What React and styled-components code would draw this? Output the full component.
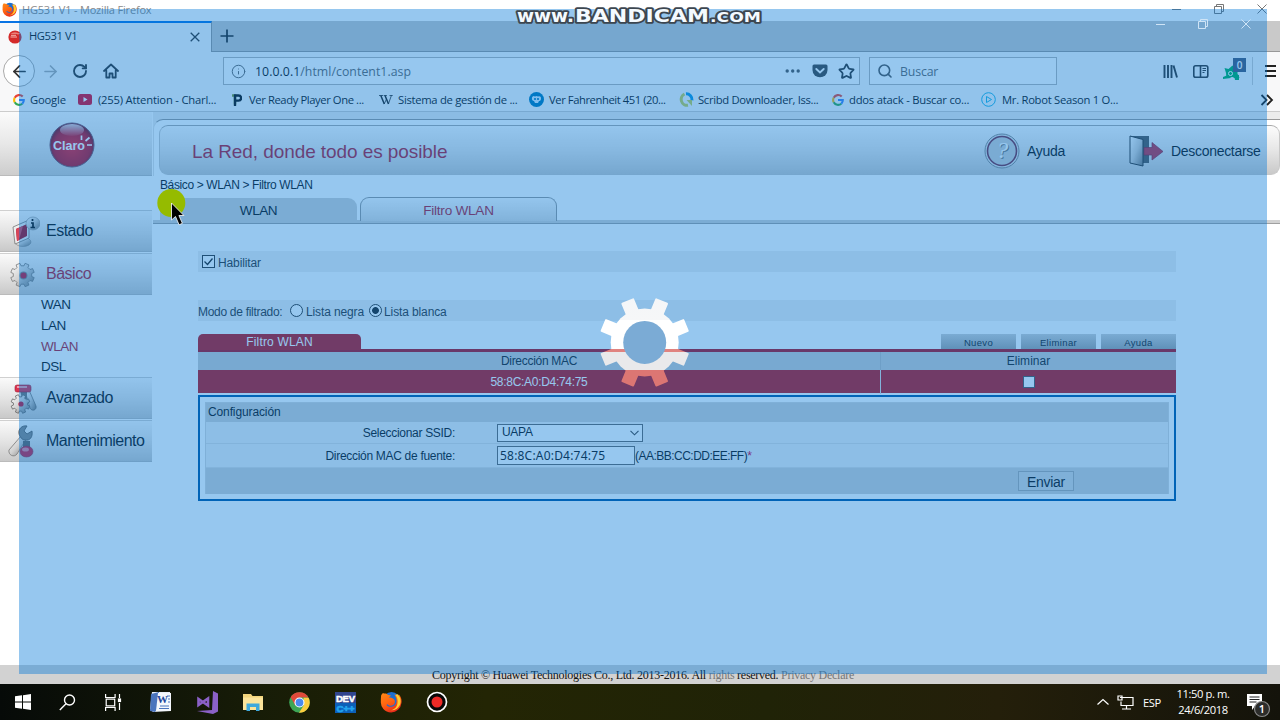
import React from "react";
import styled, { createGlobalStyle } from "styled-components";
import { ArrowLeft, ArrowRight, RotateCw, Star, Search, Info } from "lucide-react";

const GlobalStyle = createGlobalStyle`
  * {
    box-sizing: border-box;
  }
  body {
    margin: 0;
    overflow: hidden;
    background: #fff;
  }
`;

const Screen = styled.div`
  position: relative;
  width: 1280px;
  height: 720px;
  overflow: hidden;
  display: flex;
  flex-direction: column;
  font-family: "Liberation Sans", Arial, sans-serif;
  color: #111;
`;

/* ---------- browser ---------- */

const TitleBar = styled.div`
  height: 21px;
  display: flex;
  align-items: center;
  padding: 0 13px 3px 2px;
  background: #fff;
  font: 11px/18px "Open Sans", sans-serif;
  color: #8a8a8a;
`;

const TitleText = styled.span`
  flex: 1;
  margin: 2px 0 0 5px;
  letter-spacing: -0.18px;
`;

const WindowButtons = styled.div`
  display: flex;
  gap: 32px;
  align-items: center;
  color: ${(p) => p.$color || "#777"};
`;

const TabStrip = styled.div`
  height: 31px;
  display: flex;
  background: #c9c9c9;
  border-bottom: 1px solid #989898;
`;

const BrowserTab = styled.div`
  width: 212px;
  height: 31px;
  display: flex;
  align-items: center;
  padding: 0 11px 2px 8px;
  background: #f8f8f9;
  border-top: 2px solid #0a74e4;
  border-right: 1px solid #989898;
  font: 11.2px/26px "Open Sans", sans-serif;
  letter-spacing: -0.4px;
  span {
    flex: 1;
    margin: -2px 0 0 7px;
  }
`;

const NewTab = styled.div`
  display: flex;
  align-items: center;
  padding: 0 0 1px 8px;
`;

const NavBar = styled.div`
  height: 38px;
  display: flex;
  align-items: center;
  background: #f8f8f9;
  color: #333;
`;

const BackButton = styled.div`
  width: 32px;
  height: 32px;
  margin: 0 6px 0 3px;
  border: 1px solid #aaa;
  border-radius: 50%;
  background: #fff;
  display: grid;
  place-items: center;
`;

const NavSlot = styled.div`
  width: ${(p) => p.$w || 30}px;
  display: grid;
  place-items: center;
  color: ${(p) => p.$color || "#333"};
`;

const UrlBar = styled.div`
  width: ${(p) => p.$w}px;
  height: 28px;
  margin-left: ${(p) => p.$left}px;
  padding-left: 7px;
  border: 1px solid #b4b4b4;
  background: #fff;
  display: flex;
  align-items: center;
  font: 12.3px/26px "Open Sans", sans-serif;
  color: #666;
  b {
    font-weight: 400;
    color: #111;
  }
  span {
    flex: 1;
    margin: 1px 0 0 ${(p) => p.$gap || 9}px;
    letter-spacing: ${(p) => p.$ls || 0.05}px;
  }
`;

const ToolbarEnd = styled.div`
  flex: 1;
  display: flex;
  align-items: center;
  padding-left: 98px;
`;

const Bookmarks = styled.div`
  height: 22px;
  display: flex;
  padding-left: 13px;
  background: #f8f8f9;
  border-bottom: 1px solid #ccc;
`;

const Bookmark = styled.div`
  width: ${(p) => p.$w}px;
  display: flex;
  align-items: center;
  padding-bottom: 2px;
  white-space: nowrap;
  font: 11.25px/18px "Open Sans", sans-serif;
  letter-spacing: ${(p) => p.$ls}px;
`;

const BookmarkIcon = styled.div`
  width: ${(p) => p.$w}px;
  display: flex;
  flex: none;
`;

/* ---------- router page ---------- */

const Page = styled.div`
  height: 553px;
  display: flex;
  background: #fff;
`;

const Sidebar = styled.div`
  width: 152px;
  margin-right: 1px;
  display: flex;
  flex-direction: column;
`;

const LogoBox = styled.div`
  height: 64px;
  margin-bottom: 34px;
  padding: 2px 8px 0 0;
  display: grid;
  place-items: center;
  background: linear-gradient(#fbfbfb, #e8e8e8 50%, #cdcdcd);
  border-bottom: 1px solid #bbb;
`;

const MenuItem = styled.div`
  height: 42px;
  margin-bottom: ${(p) => p.$gap || 0}px;
  padding-left: 8px;
  display: flex;
  align-items: center;
  gap: 6px;
  background: linear-gradient(#fafafa, #e4e4e4 50%, #c9c9c9);
  border-top: 1px solid #d0d0d0;
  border-bottom: 1px solid #bbb;
  font-size: 16px;
  letter-spacing: -0.5px;
  color: ${(p) => (p.$active ? "#b41b33" : "#111")};
  svg {
    flex: none;
  }
`;

const SubMenu = styled.div`
  height: 82px;
  padding: 0 0 0 41px;
  font-size: 13.5px;
  line-height: 20.8px;
`;

const SubItem = styled.div`
  letter-spacing: -0.5px;
  color: ${(p) => (p.$active ? "#b41b33" : "#111")};
`;

const Main = styled.div`
  flex: 1;
  display: flex;
  flex-direction: column;
`;

const Masthead = styled.div`
  height: 64px;
  padding-top: 7px;
  background: #ececec;
`;

const HeaderFrame = styled.div`
  height: 57px;
  padding: 5px 0 0 5px;
  border-top: 1px solid #999;
  border-left: 1px solid #e2e2e2;
  border-top-left-radius: 10px;
  background: #fff;
`;

const Header = styled.div`
  height: 50px;
  padding: 2px 0 0 32px;
  display: flex;
  align-items: center;
  border: 1px solid #c8c8c8;
  border-top-color: #aaa;
  border-radius: 9px;
  background: linear-gradient(#fcfcfc, #e6e6e6 50%, #c9c9c9);
  font-size: 14px;
`;

const Slogan = styled.div`
  width: 792px;
  padding-top: 1px;
  font-size: 19px;
  letter-spacing: -0.08px;
  color: #b41b33;
`;

const HeaderLink = styled.div`
  width: ${(p) => p.$w}px;
  display: flex;
  align-items: center;
  gap: 7px;
  letter-spacing: -0.3px;
`;

const Breadcrumb = styled.div`
  height: 21px;
  padding-left: 7px;
  font-size: 12px;
  line-height: 19px;
  letter-spacing: -0.38px;
`;

const PageTabs = styled.div`
  height: 27px;
  padding-left: 7px;
  display: flex;
  gap: 3px;
  border-bottom: 1px solid #a0a0a0;
  background: linear-gradient(transparent 23px, #d2d2d2 23px);
`;

const PageTab = styled.div`
  width: 197px;
  height: ${(p) => (p.$active ? 24 : 22)}px;
  margin-top: ${(p) => (p.$active ? 0 : 1)}px;
  border-radius: 9px 9px 0 0;
  border: ${(p) => (p.$active ? "1px solid #999" : "0")};
  border-bottom: 0;
  background: ${(p) =>
    p.$active ? "linear-gradient(#fcfcfc, #dcdcdc)" : "#d2d2d2"};
  color: ${(p) => (p.$active ? "#b41b33" : "#111")};
  font-size: 13.6px;
  line-height: 26px;
  letter-spacing: ${(p) => (p.$active ? -0.25 : -0.5)}px;
  text-align: center;
`;

const Content = styled.div`
  width: 978px;
  margin-left: 45px;
  display: flex;
  flex-direction: column;
  font-size: 12px;
  letter-spacing: -0.3px;
`;

const OptionRow = styled.div`
  height: 21px;
  margin-top: ${(p) => p.$top}px;
  display: flex;
  align-items: center;
  padding: 2px 0 0 ${(p) => p.$pad || 0}px;
  background: #f0f0f0;
  color: #333;
  letter-spacing: -0.12px;
`;

const ModeLabel = styled.span`
  width: 86px;
  letter-spacing: -0.3px;
`;

const CheckBox = styled.span`
  width: 13px;
  height: 13px;
  margin: 0 3px 3px 0;
  border: 1px solid #333;
  background: #fff;
  display: grid;
  place-items: center;
`;

const Radio = styled.span`
  width: 13px;
  height: 13px;
  margin: ${(p) => p.$margin};
  border: 1px solid #333;
  border-radius: 50%;
  background: ${(p) =>
    p.$on ? "radial-gradient(circle, #222 3px, #fff 3.8px)" : "#fff"};
`;

const TableTop = styled.div`
  height: 18px;
  margin-top: 13px;
  display: flex;
  align-items: flex-start;
  justify-content: space-between;
  border-bottom: 3px solid #b30c1c;
`;

const TableTab = styled.div`
  width: 163px;
  height: 16px;
  border-radius: 5px 5px 0 0;
  background: #c11219;
  color: #fff;
  text-align: center;
  line-height: 17px;
  letter-spacing: 0.16px;
`;

const TableActions = styled.div`
  display: flex;
  gap: 5px;
`;

const ActionButton = styled.div`
  width: 75px;
  height: 15px;
  background: linear-gradient(#d0d0d0, #a3a3a3);
  font-size: 9.5px;
  line-height: 17px;
  text-align: center;
  letter-spacing: 0.35px;
  color: #222;
`;

const TableRow = styled.div`
  height: ${(p) => (p.$selected ? 23 : 18)}px;
  display: grid;
  grid-template-columns: 683px 295px;
  line-height: ${(p) => (p.$selected ? 24 : 19)}px;
  background: ${(p) => (p.$selected ? "#c11219" : "#cdcdcd")};
  color: ${(p) => (p.$selected ? "#fff" : "#222")};
`;

const Cell = styled.div`
  display: flex;
  justify-content: center;
  align-items: center;
  letter-spacing: ${(p) => p.$ls || -0.3}px;
  border-right: ${(p) => (p.$line ? `1px solid ${p.$line}` : "0")};
`;

const WhiteBox = styled.span`
  width: 12px;
  height: 12px;
  background: #fff;
  border: 1px solid #555;
`;

const ConfigPanel = styled.div`
  height: 106px;
  margin-top: 2px;
  padding: 5px 5px 0;
  border: 2px solid #0055a0;
  background: #fff;
`;

const ConfigInner = styled.div`
  border: 1px solid #d8d8d8;
  border-bottom: 0;
  background: #f0f0f0;
`;

const ConfigTitle = styled.div`
  height: 19px;
  padding-left: 2px;
  line-height: 19px;
  background: #d2d2d2;
  letter-spacing: -0.12px;
`;

const FormRow = styled.div`
  height: ${(p) => p.$h}px;
  display: grid;
  grid-template-columns: 249px 42px 1fr;
  align-items: center;
  border-bottom: 1px solid #dedede;
`;

const FieldLabel = styled.div`
  text-align: right;
`;

const FieldCell = styled.div`
  grid-column: 3;
  display: flex;
  align-items: center;
`;

const SelectBox = styled.div`
  width: 146px;
  height: 18px;
  padding: 0 3px 0 4px;
  border: 1px solid #666;
  background: #fff;
  display: flex;
  align-items: center;
  justify-content: space-between;
  line-height: 17px;
`;

const TextInput = styled.div`
  width: 138px;
  height: 19px;
  padding-left: 2px;
  border: 1px solid #666;
  background: #fff;
  font: 12px/18px "Noto Sans", sans-serif;
  letter-spacing: 0.2px;
`;

const Hint = styled.span`
  letter-spacing: -0.52px;
`;

const Required = styled.span`
  color: #d0003c;
`;

const FormFooter = styled.div`
  height: 26px;
  padding-right: 94px;
  display: flex;
  align-items: center;
  justify-content: flex-end;
  background: #d2d2d2;
`;

const SendButton = styled.div`
  width: 56px;
  height: 20px;
  border: 1px solid #aaa;
  background: #d8d8d8;
  font-size: 14px;
  line-height: 20px;
  text-align: center;
`;

const Copyright = styled.div`
  height: 19px;
  padding-left: 6px;
  background: #d2d2d2;
  text-align: center;
  font: 12px/20px "Liberation Serif", serif;
  letter-spacing: -0.27px;
  white-space: pre;
  span {
    color: #777;
  }
`;

/* ---------- taskbar ---------- */

const Taskbar = styled.div`
  height: 36px;
  display: flex;
  align-items: center;
  background: linear-gradient(90deg, #060a08, #171c07 20%, #232504 38%, #202307 60%, #241f0a 78%, #14130b);
  color: #fff;
  font-family: "Open Sans", sans-serif;
  font-size: 11.2px;
`;

const TaskIcons = styled.div`
  flex: 1;
  display: flex;
  align-items: center;
`;

const TaskSlot = styled.div`
  width: ${(p) => p.$w || 46}px;
  display: grid;
  place-items: center;
`;

const Tray = styled.div`
  display: flex;
  align-items: center;
`;

const Clock = styled.div`
  width: 68px;
  margin: 0 3px 0 4px;
  line-height: 16px;
  text-align: center;
  letter-spacing: -0.4px;
`;

const Language = styled.div`
  width: 26px;
  text-align: center;
  letter-spacing: -0.4px;
`;

/* ---------- things lying over the desktop ---------- */

const GhostWindow = styled.div`
  position: absolute;
  left: 19px;
  top: 9px;
  width: 1248px;
  height: 665px;
  background: rgba(0, 120, 215, 0.41);
  display: flex;
  justify-content: flex-end;
  align-items: flex-start;
  padding: 10px 16px 0 0;
`;

const Floating = styled.svg`
  position: absolute;
  left: ${(p) => p.$x}px;
  top: ${(p) => p.$y}px;
`;

const FirefoxIcon = ({ size = 16 }) => (
  <svg width={size} height={size} viewBox="0 0 20 20">
    <defs>
      <linearGradient id={`fx${size}`} x1="0" y1="0" x2="0.6" y2="1">
        <stop offset="0" stopColor="#ff8a16" />
        <stop offset="0.5" stopColor="#ff6611" />
        <stop offset="1" stopColor="#e8281c" />
      </linearGradient>
    </defs>
    <circle cx="10.5" cy="9" r="8" fill="#1c6fd0" />
    <path d="M1 4C2 2 3 1 3.5 2.3 5 2 6.5 2.5 7 3.5L10 4 8 6c4 0 6 2 5.500 4.500C13 14 8 14 7 12c-1 0-1 1-1 1 3 3 9 1 9-4 0-3-1-4-2-6 2 1 3 2 3.600 3.500L17 3c2 2 3 5 2.500 8A9.400 9.400 0 0 1 10 19.500 9.400 9.400 0 0 1 .8 9C.7 7 1 5 1 4z" fill={`url(#fx${size})`} />
    <path d="M16 3c3 3 3.500 7 2 10s-5 5-8 4.500c4-1 6-4 6-8 0-2-.5-4-2-6z" fill="#ffcf2e" />
  </svg>
);

const ClaroDot = () => (
  <svg width="14" height="14" viewBox="0 0 14 14">
    <circle cx="7" cy="7" r="6.600" fill="#d42a2a" />
    <path d="M2.500 7h6.500M3 5.300h5M10 4.500l1.500-1.500" stroke="#f5b3ac" strokeWidth="1" />
    <path d="M2.500 4a5.500 4 0 0 1 9 0z" fill="#e9807a" />
  </svg>
);

const GoogleIcon = () => (
  <svg width="12" height="12" viewBox="0 0 12 12" fill="none" strokeWidth="2.100">
    <path d="M9.700 2.600A5 5 0 0 0 1.700 3.700" stroke="#ea4335" />
    <path d="M1.700 3.700a5 5 0 0 0 0 4.600" stroke="#fbbc05" />
    <path d="M1.700 8.300a5 5 0 0 0 7.600 1.400" stroke="#34a853" />
    <path d="M9.300 9.700A5 5 0 0 0 10.800 6H6" stroke="#4285f4" />
  </svg>
);

const bookmarks = [
  {
    text: "Google",
    w: 65,
    icon: 17,
    ls: -0.2,
    draw: <GoogleIcon />,
  },
  {
    text: "(255) Attention - Charl...",
    w: 153,
    icon: 20,
    ls: -0.21,
    draw: (
      <svg width="14" height="11" viewBox="0 0 14 11">
        <rect width="14" height="11" rx="2.500" fill="#e0062a" />
        <path d="M5.500 3l4 2.500-4 2.500z" fill="#fff" />
      </svg>
    ),
  },
  {
    text: "Ver Ready Player One ...",
    w: 148,
    icon: 18,
    ls: -0.41,
    draw: (
      <svg width="11" height="12" viewBox="0 0 11 12" fill="none">
        <path d="M1 1.500h3v9" stroke="#7d9a33" strokeWidth="2.500" />
        <path d="M4 12V1.500h3.500a2.200 2.200 0 0 1 0 5.200H4" stroke="#111" strokeWidth="2.300" />
      </svg>
    ),
  },
  {
    text: "Sistema de gestión de ...",
    w: 150,
    icon: 19,
    ls: -0.29,
    draw: (
      <svg width="14" height="10" viewBox="0 0 14 10" fill="none" stroke="#222">
        <path d="M1.800 .5l3.500 8.500M6 .5l3.500 8.500" strokeWidth="1.500" />
        <path d="M5.200 9l2.300-5M9.400 9l3-8.500M0 .5h4M4.700 .5h3.200M10.500 .5h3.200" strokeWidth=".8" />
      </svg>
    ),
  },
  {
    text: "Ver Fahrenheit 451 (20...",
    w: 150,
    icon: 20,
    ls: -0.44,
    draw: (
      <svg width="15" height="15" viewBox="0 0 15 15">
        <circle cx="7.500" cy="7.500" r="7.500" fill="#007ab8" />
        <path d="M3 5.500a2 2 0 0 1 3-1 3 3 0 0 1 3 0 2 2 0 0 1 3 2c0 2-1 2.500-2 2.500l-1 2H6L5 9C3.500 9 2.500 7.500 3 5.500z" fill="#d9efff" />
        <circle cx="6" cy="7" r="1.100" fill="#007ab8" />
        <circle cx="9" cy="7" r="1.100" fill="#007ab8" />
      </svg>
    ),
  },
  {
    text: "Scribd Downloader, Iss...",
    w: 153,
    icon: 19,
    ls: -0.32,
    draw: (
      <svg width="15" height="15" viewBox="0 0 15 15" fill="none" strokeWidth="3">
        <path d="M5.500 2A6 6 0 0 0 9 13.300" stroke="#c7cf55" />
        <path d="M7 1.800a5.800 5.800 0 0 1 6 6.500" stroke="#1298e0" />
        <path d="M7.500 8l5.500 6v-6z" fill="#c7cf55" />
      </svg>
    ),
  },
  {
    text: "ddos atack - Buscar co...",
    w: 149,
    icon: 17,
    ls: -0.22,
    draw: <GoogleIcon />,
  },
  {
    text: "Mr. Robot Season 1 O...",
    w: 279,
    icon: 21,
    ls: -0.28,
    draw: (
      <svg width="15" height="15" viewBox="0 0 15 15" fill="none" stroke="#22b4e0">
        <circle cx="7.500" cy="7.500" r="6.800" />
        <path d="M5.500 4.500l5 3-5 3z" />
      </svg>
    ),
  },
];

const WindowControls = ({ color }) => (
  <WindowButtons $color={color}>
    <svg width="10" height="10" stroke="currentColor">
      <path d="M0 5.500h9" />
    </svg>
    <svg width="11" height="10" stroke="currentColor" fill="none">
      <path d="M.5 2.500h7v7h-7zM2.500 2.500v-2h7v7h-2" />
    </svg>
    <svg width="10" height="10" stroke="currentColor">
      <path d="M.5 .5l9 9M9.500 .5l-9 9" />
    </svg>
  </WindowButtons>
);

const gearPath = (cx, cy, r, body, n) => {
  const points = [];
  for (let i = 0; i < n; i++) {
    const a = (i / n) * Math.PI * 2 + Math.PI / n;
    const steps = [
      [body, -0.3],
      [r, -0.22],
      [r, 0.22],
      [body, 0.3],
    ];
    steps.forEach(([d, k]) => {
      const t = a + (k * Math.PI * 2) / n;
      points.push(`${(cx + d * Math.cos(t)).toFixed(1)} ${(cy + d * Math.sin(t)).toFixed(1)}`);
    });
  }
  return `M${points.join("L")}z`;
};

const StatusIcon = () => (
  <svg width="32" height="32" viewBox="0 0 32 32">
    <defs>
      <linearGradient id="steel" x1="0" y1="0" x2="1" y2="1">
        <stop offset="0" stopColor="#fff" />
        <stop offset="0.5" stopColor="#cfcfcf" />
        <stop offset="1" stopColor="#777" />
      </linearGradient>
    </defs>
    <ellipse cx="15" cy="27" rx="8" ry="4.500" fill="url(#steel)" stroke="#888" strokeWidth=".6" />
    <path d="M5 12l16-7v18L7 29z" fill="#eee" stroke="#777" strokeWidth=".8" />
    <path d="M8 14l11-5v12L9 26z" fill="#a80d22" />
    <path d="M8 14l7-3-4 14-2 1z" fill="#d8455a" />
    <ellipse cx="25" cy="8.500" rx="7" ry="6.500" fill="url(#steel)" stroke="#999" strokeWidth=".7" />
    <path d="M23 8h2v4.500M22.500 12.500h4.500M24.500 4v2" stroke="#111" strokeWidth="1.700" fill="none" />
  </svg>
);

const BasicIcon = () => (
  <svg width="32" height="32" viewBox="0 0 32 32">
    <path d={gearPath(14.5, 17, 12, 9.3, 8)} fill="url(#steel)" stroke="#777" strokeWidth=".8" />
    <circle cx="15.500" cy="17.500" r="4" fill="#888" />
    <circle cx="15.500" cy="17.500" r="3" fill="#c81838" />
  </svg>
);

const AdvancedIcon = () => (
  <svg width="32" height="32" viewBox="0 0 32 32">
    <path d="M17 9l4-1 7 16c1 4-4 6-6 2z" fill="url(#steel)" stroke="#666" strokeWidth=".7" />
    <path d="M12 8h7v9h-5z" fill="#777" />
    <rect x="7" y="3" width="16" height="7" rx="2" fill="#dc3450" stroke="#a01c34" strokeWidth=".6" />
    <path d="M9 5h10" stroke="#fff" strokeOpacity=".7" strokeWidth="1.500" />
    <path d={gearPath(12.5, 22, 9.5, 7.2, 8)} fill="url(#steel)" stroke="#666" strokeWidth=".8" />
    <circle cx="13" cy="22" r="2.600" fill="#c81838" />
  </svg>
);

const MaintenanceIcon = () => (
  <svg width="32" height="36" viewBox="0 0 32 36">
    <path d="M13 13l6 2-10 16c-3 4-9 1-8-4z" fill="url(#steel)" stroke="#777" strokeWidth=".8" />
    <path d="M11 11c-1-5 3-9 8-8l-3 5 3 3 5-3c1 6-2 10-7 9-3 0-5-3-6-6z" fill="#888" stroke="#555" strokeWidth=".8" />
    <path d="M15 18h7v7h-7z" fill="#666" />
    <ellipse cx="18.500" cy="28.500" rx="6.500" ry="5.500" fill="#cf2448" stroke="#99304b" strokeWidth=".6" />
    <ellipse cx="17.500" cy="26.500" rx="3.500" ry="2" fill="#fff" fillOpacity=".45" />
  </svg>
);

const ClaroLogo = () => (
  <svg width="46" height="46" viewBox="0 0 46 46">
    <defs>
      <radialGradient id="claro" cx="0.5" cy="0.55" r="0.55">
        <stop offset="0" stopColor="#ea1d30" />
        <stop offset="0.75" stopColor="#c01228" />
        <stop offset="1" stopColor="#741020" />
      </radialGradient>
      <linearGradient id="gloss" x1="0" y1="0" x2="0" y2="1">
        <stop offset="0" stopColor="#fff" stopOpacity="0.8" />
        <stop offset="1" stopColor="#fff" stopOpacity="0.05" />
      </linearGradient>
    </defs>
    <circle cx="23" cy="23" r="22" fill="url(#claro)" stroke="#7a5060" strokeWidth="1" />
    <ellipse cx="23" cy="8" rx="12" ry="6" fill="url(#gloss)" />
    <text x="4" y="28" fontFamily="Liberation Sans" fontSize="13" fontWeight="700" fill="#fff" textLength="32" lengthAdjust="spacingAndGlyphs">
      Claro
    </text>
    <path d="M32.500 13.500v4.500M36.500 19l4-3.500M38 23h5" stroke="#fff" strokeWidth="1.700" />
  </svg>
);

const HelpIcon = () => (
  <svg width="36" height="36" viewBox="0 0 36 36">
    <circle cx="18" cy="18" r="17" fill="#e4e4e4" stroke="#888" strokeWidth="1" />
    <circle cx="18" cy="18" r="14.500" fill="#cfcfcf" stroke="#7a3048" strokeWidth="1.600" />
    <text x="19" y="26" textAnchor="middle" fontFamily="Liberation Serif" fontStyle="italic" fontSize="24" fill="#777">
      ?
    </text>
    <text x="18" y="25" textAnchor="middle" fontFamily="Liberation Serif" fontStyle="italic" fontSize="24" fill="#fff">
      ?
    </text>
  </svg>
);

const LogoutIcon = () => (
  <svg width="35" height="32" viewBox="0 0 35 32">
    <path d="M1 1h19v27h-6V4H1z" fill="#555" />
    <path d="M1 1l13 3.500V31L1 28z" fill="url(#steel)" stroke="#333" strokeWidth="1" />
    <path d="M15 12.500h8V7.500l11 9-11 8.500v-5h-8z" fill="#c03048" stroke="#902038" strokeWidth=".7" />
  </svg>
);

const teeth = [22.5, 67.5, 112.5, 157.5, 202.5, 247.5, 292.5, 337.5];

const App = () => {
  return (
    <Screen>
      <GlobalStyle />

      <TitleBar>
        <FirefoxIcon size={15} />
        <TitleText>HG531 V1 - Mozilla Firefox</TitleText>
        <WindowControls />
      </TitleBar>

      <TabStrip>
        <BrowserTab>
          <ClaroDot />
          <span>HG531 V1</span>
          <svg width="10" height="10" stroke="#333" strokeWidth="1.300">
            <path d="M.7 .7l8.600 8.600M9.300 .7L.7 9.300" />
          </svg>
        </BrowserTab>
        <NewTab>
          <svg width="14" height="14" stroke="#222" strokeWidth="1.700">
            <path d="M7 .5v13M.5 7h13" />
          </svg>
        </NewTab>
      </TabStrip>

      <NavBar>
        <BackButton>
          <ArrowLeft size={19} strokeWidth={2.2} />
        </BackButton>
        <NavSlot $w={16} $color="#aaa">
          <ArrowRight size={19} strokeWidth={2} />
        </NavSlot>
        <NavSlot $w={46}>
          <RotateCw size={16} strokeWidth={2.8} />
        </NavSlot>
        <NavSlot $w={13}>
          <svg width="16" height="16" viewBox="0 0 16 16" fill="none" stroke="currentColor" strokeWidth="1.800">
            <path d="M1 8l7-6.500L15 8M3.300 7.500v7h3.200v-4h3v4h3.200v-7" strokeLinejoin="round" strokeLinecap="round" />
          </svg>
        </NavSlot>
        <UrlBar $w={637} $left={107}>
          <Info size={15} strokeWidth={1.6} />
          <span>
            <b>10.0.0.1</b>/html/content1.asp
          </span>
          <NavSlot $w={26}>
            <svg width="16" height="4" fill="#555">
              <circle cx="2.200" cy="2" r="1.700" />
              <circle cx="7.700" cy="2" r="1.700" />
              <circle cx="13.200" cy="2" r="1.700" />
            </svg>
          </NavSlot>
          <NavSlot $w={27}>
            <svg width="16" height="14" viewBox="0 0 16 14">
              <path d="M2 .5h12q1.500 0 1.500 1.500v4a7.500 7.300 0 0 1-15 0V2Q.5 .5 2 .5z" fill="#444" />
              <path d="M4.300 5l3.700 3.500L11.700 5" fill="none" stroke="#fff" strokeWidth="1.900" strokeLinecap="round" />
            </svg>
          </NavSlot>
          <NavSlot $w={26}>
            <Star size={17} strokeWidth={2.5} />
          </NavSlot>
        </UrlBar>
        <UrlBar $w={188} $left={9} $gap={7} $ls={-0.14}>
          <Search size={16} strokeWidth={2.4} color="#555" />
          <span>Buscar</span>
        </UrlBar>
        <ToolbarEnd>
          <NavSlot $w={31}>
            <svg width="15" height="13" stroke="#333" strokeWidth="1.900" fill="none">
              <path d="M1.500 0v13M5 0v13M8.500 0v13M10.500 .5l3.500 12" />
            </svg>
          </NavSlot>
          <NavSlot $w={29}>
            <svg width="16" height="13" stroke="#333" fill="none">
              <rect x=".8" y=".8" width="14" height="11.400" rx="1.800" strokeWidth="1.600" />
              <path d="M7.500 1v11" strokeWidth="1.600" />
              <path d="M9.500 3.500h3.500M9.500 5.500h3.500M9.500 7.500h2" />
            </svg>
          </NavSlot>
          <NavSlot $w={37}>
            <svg width="24" height="28" viewBox="0 0 24 28">
              <path d="M2.500 11l4 1 4-3.500 5 5.500v3l2 3.500-2 2-5-2.500-6 1L4 16z" fill="#00b060" />
              <path d="M1 20l5-2 3 3-8 1zM12 17l5 1 0 5h-4z" fill="#00b060" />
              <circle cx="8.500" cy="16.500" r="2" fill="none" stroke="#fff" />
              <rect x="11" y="1" width="13" height="14" fill="#46597a" />
              <text x="17.500" y="12" fontSize="10" textAnchor="middle" fontFamily="Open Sans" fontWeight="600" fill="#fff">0</text>
            </svg>
          </NavSlot>
          <NavSlot $w={20}>
            <svg width="28" height="28" stroke="#222" strokeWidth="1.900">
              <path d="M.5 0v28" stroke="#ccc" strokeWidth="1" />
              <path d="M13 9h11M13 14h11M13 19h11" />
            </svg>
          </NavSlot>
        </ToolbarEnd>
      </NavBar>

      <Bookmarks>
        {bookmarks.map((b) => (
          <Bookmark key={b.text} $w={b.w} $ls={b.ls}>
            <BookmarkIcon $w={b.icon}>{b.draw}</BookmarkIcon>
            {b.text}
          </Bookmark>
        ))}
        <svg width="14" height="20" fill="none" stroke="#222" strokeWidth="1.800">
          <path d="M1.500 5l5 5-5 5M7 5l5 5-5 5" />
        </svg>
      </Bookmarks>

      <Page>
        <Sidebar>
          <LogoBox>
            <ClaroLogo />
          </LogoBox>
          <MenuItem $gap={1}>
            <StatusIcon />
            Estado
          </MenuItem>
          <MenuItem $active>
            <BasicIcon />
            Básico
          </MenuItem>
          <SubMenu>
            <SubItem>WAN</SubItem>
            <SubItem>LAN</SubItem>
            <SubItem $active>WLAN</SubItem>
            <SubItem>DSL</SubItem>
          </SubMenu>
          <MenuItem $gap={1}>
            <AdvancedIcon />
            Avanzado
          </MenuItem>
          <MenuItem>
            <MaintenanceIcon />
            Mantenimiento
          </MenuItem>
        </Sidebar>

        <Main>
          <Masthead>
            <HeaderFrame>
              <Header>
                <Slogan>La Red, donde todo es posible</Slogan>
                <HeaderLink $w={145}>
                  <HelpIcon />
                  Ayuda
                </HeaderLink>
                <HeaderLink $w={140}>
                  <LogoutIcon />
                  Desconectarse
                </HeaderLink>
              </Header>
            </HeaderFrame>
          </Masthead>
          <Breadcrumb>Básico &gt; WLAN &gt; Filtro WLAN</Breadcrumb>
          <PageTabs>
            <PageTab>WLAN</PageTab>
            <PageTab $active>Filtro WLAN</PageTab>
          </PageTabs>

          <Content>
            <OptionRow $top={27} $pad={4}>
              <CheckBox>
                <svg width="11" height="11" fill="none" stroke="#222" strokeWidth="1.300">
                  <path d="M1.500 5.500l3 3 5-6" />
                </svg>
              </CheckBox>
              Habilitar
            </OptionRow>
            <OptionRow $top={28}>
              <ModeLabel>Modo de filtrado:</ModeLabel>
              <Radio $margin="0 3px 3px 6px" />
              Lista negra
              <Radio $on $margin="0 2px 3px 5px" />
              Lista blanca
            </OptionRow>

            <TableTop>
              <TableTab>Filtro WLAN</TableTab>
              <TableActions>
                <ActionButton>Nuevo</ActionButton>
                <ActionButton>Eliminar</ActionButton>
                <ActionButton>Ayuda</ActionButton>
              </TableActions>
            </TableTop>
            <TableRow>
              <Cell $line="#bbb">Dirección MAC</Cell>
              <Cell $ls={0.05}>Eliminar</Cell>
            </TableRow>
            <TableRow $selected>
              <Cell $line="#ddd">58:8C:A0:D4:74:75</Cell>
              <Cell>
                <WhiteBox />
              </Cell>
            </TableRow>

            <ConfigPanel>
              <ConfigInner>
                <ConfigTitle>Configuración</ConfigTitle>
                <FormRow $h={22}>
                  <FieldLabel>Seleccionar SSID:</FieldLabel>
                  <FieldCell>
                    <SelectBox>
                      UAPA
                      <svg width="9" height="6" fill="none" stroke="#444" strokeWidth="1.100">
                        <path d="M.5 .8l4 4 4-4" />
                      </svg>
                    </SelectBox>
                  </FieldCell>
                </FormRow>
                <FormRow $h={24}>
                  <FieldLabel>Dirección MAC de fuente:</FieldLabel>
                  <FieldCell>
                    <TextInput>58:8C:A0:D4:74:75</TextInput>
                    <Hint>(AA:BB:CC:DD:EE:FF)</Hint>
                    <Required>*</Required>
                  </FieldCell>
                </FormRow>
                <FormFooter>
                  <SendButton>Enviar</SendButton>
                </FormFooter>
              </ConfigInner>
            </ConfigPanel>
          </Content>
        </Main>
      </Page>

      <Copyright>
        Copyright © Huawei Technologies Co., Ltd. 2013-2016. All <span>rights</span> reserved. <span>Privacy Declare</span>
      </Copyright>

      <Taskbar>
        <TaskIcons>
          <TaskSlot $w={45}>
            <svg width="16" height="16" fill="#fff">
              <path d="M0 2.300l7-1v6.200H0zM8 1.200L16 0v7.500H8zM0 8.500h7v6.200l-7-1zM8 8.500h8V16l-8-1.200z" />
            </svg>
          </TaskSlot>
          <TaskSlot $w={45}>
            <svg width="17" height="17" fill="none" stroke="#fff" strokeWidth="1.400">
              <circle cx="10.500" cy="6" r="5" />
              <path d="M7 9.700L.8 16" />
            </svg>
          </TaskSlot>
          <TaskSlot $w={47}>
            <svg width="17" height="17" fill="none" stroke="#fff" strokeWidth="1.200">
              <path d="M.6 0v3.500h9.500V0M.6 17v-3.500h9.500V17M1.200 5.200h8.500v6.600H1.200zM14.500 0v4M14.500 9v7" />
              <rect x="13.500" y="5" width="2" height="2.500" fill="#fff" />
            </svg>
          </TaskSlot>
          <TaskSlot $w={47}>
            <svg width="22" height="22">
              <path d="M2 1h18l1 19-18 1-3-3z" fill="#e8eef8" />
              <path d="M1 3l8-2v14l-4 6-5-1z" fill="#4a74bd" />
              <path d="M8 2h13v18H6z" fill="#f4f7fc" />
              <text x="7" y="12" fontFamily="Liberation Serif" fontWeight="700" fontSize="11" fill="#23479c">W</text>
              <path d="M10 15h9M9 17.500h10M17 5h3M18 8h2M18 11h2" stroke="#4a74bd" />
            </svg>
          </TaskSlot>
          <TaskSlot>
            <svg width="23" height="23">
              <path d="M17 0l5 2.500v18L17 23 1 20l15-1z" fill="#8b61c8" />
              <path d="M2.500 8v6l9.500-6.500v7z" fill="none" stroke="#8b61c8" strokeWidth="2.600" />
            </svg>
          </TaskSlot>
          <TaskSlot>
            <svg width="20" height="18">
              <path d="M0 1h8l1.500 2H20v14H0z" fill="#f2d47c" />
              <path d="M0 4.500h20V17H0z" fill="#fbe49b" />
              <path d="M3.500 10.500h13V18h-3.500v-4H7v4H3.500z" fill="#3fa9dd" />
            </svg>
          </TaskSlot>
          <TaskSlot>
            <svg width="21" height="21" viewBox="0 0 21 21">
              <circle cx="10.500" cy="10.500" r="10.300" fill="#3da656" />
              <path d="M1.600 5.300A10.300 10.300 0 0 1 19.500 5.500H10.500L6 13z" fill="#e0493a" />
              <path d="M19.600 5.800A10.300 10.300 0 0 1 10 20.800L15 13 14.500 5.800z" fill="#fccd3f" />
              <circle cx="10.500" cy="10.500" r="5" fill="#fff" />
              <circle cx="10.500" cy="10.500" r="3.900" fill="#4a8af0" />
            </svg>
          </TaskSlot>
          <TaskSlot>
            <svg width="21" height="21">
              <rect width="21" height="11" fill="#31458f" />
              <rect y="11" width="21" height="10" fill="#0c5fb8" />
              <text x="1" y="10" fontFamily="Liberation Sans" fontWeight="700" fontSize="9.500" fill="#fff" stroke="#fff" strokeWidth=".5" textLength="19">DEV</text>
              <text x="1.500" y="19.500" fontFamily="Liberation Sans" fontWeight="700" fontSize="9.500" fill="#22a4ee" stroke="#22a4ee" strokeWidth=".7" textLength="18">C++</text>
            </svg>
          </TaskSlot>
          <TaskSlot>
            <FirefoxIcon size={22} />
          </TaskSlot>
          <TaskSlot>
            <svg width="22" height="22">
              <circle cx="11" cy="11" r="9.500" fill="#080808" stroke="#fff" strokeWidth="1.700" />
              <circle cx="11" cy="11" r="5.500" fill="#ee2a26" />
            </svg>
          </TaskSlot>
        </TaskIcons>
        <Tray>
          <svg width="50" height="16" fill="none" stroke="#fff" strokeWidth="1.200">
            <path d="M8.500 10.500l5.500-5 5.500 5M31 3.500h13v8H32v-4M37.500 12v3M33 15h9M29 2h4v4h-4z" />
          </svg>
          <Language>ESP</Language>
          <Clock>
            11:50 p. m.
            <br />
            24/6/2018
          </Clock>
          <svg width="40" height="36">
            <path d="M7 10h15v12h-7l-3 4v-4H7z" fill="#fff" />
            <path d="M9.500 13h10M9.500 15.500h10M9.500 18h7" stroke="#222" />
            <circle cx="22" cy="25" r="7.500" fill="#2c2c2a" stroke="#888" strokeWidth="1.200" />
            <text x="22" y="29" fontFamily="Open Sans" fontWeight="600" fontSize="11" fill="#fff" textAnchor="middle">1</text>
          </svg>
        </Tray>
      </Taskbar>

      <GhostWindow>
        <WindowControls color="#cfe4f6" />
      </GhostWindow>

      <Floating $x={596} $y={294} width="98" height="98" viewBox="596 294 98 98">
        <defs>
          <linearGradient id="gearFill" gradientUnits="userSpaceOnUse" x1="0" y1="294" x2="0" y2="394">
            <stop offset="0" stopColor="#f4f6f8" />
            <stop offset="0.26" stopColor="#f6f7f8" />
            <stop offset="0.26" stopColor="#fff" />
            <stop offset="0.55" stopColor="#fff" />
            <stop offset="0.55" stopColor="#e08380" />
            <stop offset="0.58" stopColor="#e08380" />
            <stop offset="0.58" stopColor="#e9e9eb" />
            <stop offset="0.76" stopColor="#e9e9eb" />
            <stop offset="0.76" stopColor="#dc7673" />
            <stop offset="1" stopColor="#dc7673" />
          </linearGradient>
          <mask id="gearShape">
            <circle cx="644.7" cy="342.400" r="34" fill="#fff" />
            {teeth.map((a) => (
              <rect key={a} x="637.9" y="297.200" width="13.600" height="20" rx="1" fill="#fff" transform={`rotate(${a} 644.7 342.400)`} />
            ))}
          </mask>
        </defs>
        <rect x="596" y="294" width="98" height="98" fill="url(#gearFill)" mask="url(#gearShape)" />
        <circle cx="644.7" cy="342.400" r="21.500" fill="#7babd5" />
      </Floating>

      <Floating $x={150} $y={185} width="44" height="56" viewBox="150 185 44 56">
        <circle cx="171.300" cy="203" r="14" fill="#95bb00" />
        <path d="M171.500 203v17l4-3.500 3.600 8.300 3.300-1.500-3.500-7.800h5z" fill="#000" stroke="#fff" strokeWidth=".8" />
      </Floating>

      <Floating $x={508} $y={0} width="262" height="32" viewBox="508 0 262 32">
        <g fontFamily="DejaVu Sans" fontWeight="700" fill="#f4faff" stroke="#3c4650" strokeWidth="3.600" paintOrder="stroke" strokeLinejoin="round">
          <text x="517" y="22" fontSize="17" textLength="57" lengthAdjust="spacingAndGlyphs">www.</text>
          <text x="575" y="22" fontSize="18.500" textLength="134" lengthAdjust="spacingAndGlyphs">BANDICAM</text>
          <text x="710" y="22" fontSize="13.500" textLength="51" lengthAdjust="spacingAndGlyphs">.COM</text>
        </g>
      </Floating>
    </Screen>
  );
};

export default App;
